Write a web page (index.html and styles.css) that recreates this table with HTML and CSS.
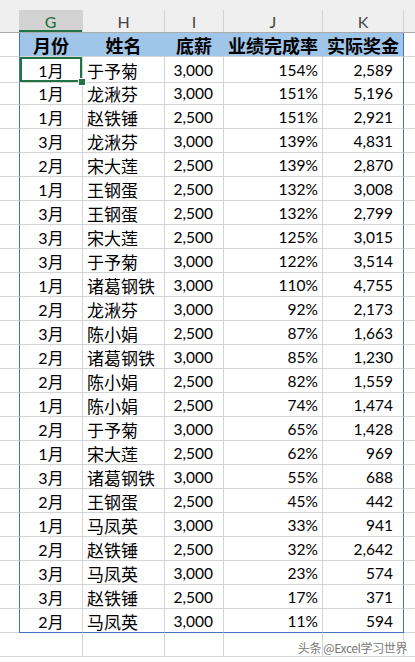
FILE: index.html
```html
<!DOCTYPE html>
<html lang="zh">
<head>
<meta charset="utf-8">
<title>Sheet</title>
<link rel="stylesheet" href="styles.css">
</head>
<body>
<div class="sheet">
  <div class="row band">
    <div class="ch edge-l"></div>
    <div class="ch active">G</div>
    <div class="ch">H</div>
    <div class="ch">I</div>
    <div class="ch">J</div>
    <div class="ch">K</div>
    <div class="ch edge-r"></div>
  </div>
  <div class="row head">
    <div class="c out"></div>
    <div class="c h first">月份</div>
    <div class="c h">姓名</div>
    <div class="c h">底薪</div>
    <div class="c h">业绩完成率</div>
    <div class="c h last">实际奖金</div>
    <div class="c out"></div>
  </div>
  <div class="row"><div class="c out"></div><div class="c m first sel">1月</div><div class="c n">于予菊</div><div class="c b">3,000</div><div class="c p">154%</div><div class="c k last">2,589</div><div class="c out"></div></div>
  <div class="row"><div class="c out"></div><div class="c m first">1月</div><div class="c n">龙湫芬</div><div class="c b">3,000</div><div class="c p">151%</div><div class="c k last">5,196</div><div class="c out"></div></div>
  <div class="row"><div class="c out"></div><div class="c m first">1月</div><div class="c n">赵铁锤</div><div class="c b">2,500</div><div class="c p">151%</div><div class="c k last">2,921</div><div class="c out"></div></div>
  <div class="row"><div class="c out"></div><div class="c m first">3月</div><div class="c n">龙湫芬</div><div class="c b">3,000</div><div class="c p">139%</div><div class="c k last">4,831</div><div class="c out"></div></div>
  <div class="row"><div class="c out"></div><div class="c m first">2月</div><div class="c n">宋大莲</div><div class="c b">2,500</div><div class="c p">139%</div><div class="c k last">2,870</div><div class="c out"></div></div>
  <div class="row"><div class="c out"></div><div class="c m first">1月</div><div class="c n">王钢蛋</div><div class="c b">2,500</div><div class="c p">132%</div><div class="c k last">3,008</div><div class="c out"></div></div>
  <div class="row"><div class="c out"></div><div class="c m first">3月</div><div class="c n">王钢蛋</div><div class="c b">2,500</div><div class="c p">132%</div><div class="c k last">2,799</div><div class="c out"></div></div>
  <div class="row"><div class="c out"></div><div class="c m first">3月</div><div class="c n">宋大莲</div><div class="c b">2,500</div><div class="c p">125%</div><div class="c k last">3,015</div><div class="c out"></div></div>
  <div class="row"><div class="c out"></div><div class="c m first">3月</div><div class="c n">于予菊</div><div class="c b">3,000</div><div class="c p">122%</div><div class="c k last">3,514</div><div class="c out"></div></div>
  <div class="row"><div class="c out"></div><div class="c m first">1月</div><div class="c n">诸葛钢铁</div><div class="c b">3,000</div><div class="c p">110%</div><div class="c k last">4,755</div><div class="c out"></div></div>
  <div class="row"><div class="c out"></div><div class="c m first">2月</div><div class="c n">龙湫芬</div><div class="c b">3,000</div><div class="c p">92%</div><div class="c k last">2,173</div><div class="c out"></div></div>
  <div class="row"><div class="c out"></div><div class="c m first">3月</div><div class="c n">陈小娟</div><div class="c b">2,500</div><div class="c p">87%</div><div class="c k last">1,663</div><div class="c out"></div></div>
  <div class="row"><div class="c out"></div><div class="c m first">2月</div><div class="c n">诸葛钢铁</div><div class="c b">3,000</div><div class="c p">85%</div><div class="c k last">1,230</div><div class="c out"></div></div>
  <div class="row"><div class="c out"></div><div class="c m first">2月</div><div class="c n">陈小娟</div><div class="c b">2,500</div><div class="c p">82%</div><div class="c k last">1,559</div><div class="c out"></div></div>
  <div class="row"><div class="c out"></div><div class="c m first">1月</div><div class="c n">陈小娟</div><div class="c b">2,500</div><div class="c p">74%</div><div class="c k last">1,474</div><div class="c out"></div></div>
  <div class="row"><div class="c out"></div><div class="c m first">2月</div><div class="c n">于予菊</div><div class="c b">3,000</div><div class="c p">65%</div><div class="c k last">1,428</div><div class="c out"></div></div>
  <div class="row"><div class="c out"></div><div class="c m first">1月</div><div class="c n">宋大莲</div><div class="c b">2,500</div><div class="c p">62%</div><div class="c k last">969</div><div class="c out"></div></div>
  <div class="row"><div class="c out"></div><div class="c m first">3月</div><div class="c n">诸葛钢铁</div><div class="c b">3,000</div><div class="c p">55%</div><div class="c k last">688</div><div class="c out"></div></div>
  <div class="row"><div class="c out"></div><div class="c m first">2月</div><div class="c n">王钢蛋</div><div class="c b">2,500</div><div class="c p">45%</div><div class="c k last">442</div><div class="c out"></div></div>
  <div class="row"><div class="c out"></div><div class="c m first">1月</div><div class="c n">马凤英</div><div class="c b">3,000</div><div class="c p">33%</div><div class="c k last">941</div><div class="c out"></div></div>
  <div class="row"><div class="c out"></div><div class="c m first">2月</div><div class="c n">赵铁锤</div><div class="c b">2,500</div><div class="c p">32%</div><div class="c k last">2,642</div><div class="c out"></div></div>
  <div class="row"><div class="c out"></div><div class="c m first">3月</div><div class="c n">马凤英</div><div class="c b">3,000</div><div class="c p">23%</div><div class="c k last">574</div><div class="c out"></div></div>
  <div class="row"><div class="c out"></div><div class="c m first">3月</div><div class="c n">赵铁锤</div><div class="c b">2,500</div><div class="c p">17%</div><div class="c k last">371</div><div class="c out"></div></div>
  <div class="row end"><div class="c out"></div><div class="c m first">2月</div><div class="c n">马凤英</div><div class="c b">3,000</div><div class="c p">11%</div><div class="c k last">594</div><div class="c out"></div></div>
  <div class="row"><div class="c out"></div><div class="c"></div><div class="c"></div><div class="c"></div><div class="c"></div><div class="c"></div><div class="c out"></div></div>
  <div class="watermark">头条 @Excel学习世界</div>
</div>
</body>
</html>
```

FILE: styles.css
```css
* { box-sizing: border-box; }
html, body { margin: 0; padding: 0; background: #fff; }
body { width: 415px; height: 662px; overflow: hidden; font-family: "Lato", "Noto Sans CJK SC", sans-serif; color: #000; }

.sheet { position: relative; width: 415px; }

.row {
  display: grid;
  grid-template-columns: 19px 64px 82px 59px 99px 81px 11px;
  height: 24px;
}

.band {
  height: 33px;
  background: #efefef;
  border-bottom: 1px solid #ababab;
  align-items: end;
}
.ch {
  height: 22px;
  border-right: 1px solid #d2d2d2;
  display: flex;
  align-items: center;
  justify-content: center;
  font-family: "Lato", sans-serif;
  font-size: 16px;
  color: #444;
}
.ch.edge-l, .ch.edge-r { border-right: none; }
.ch.active {
  background: #d2d2d2;
  color: #1f6b3f;
  box-shadow: inset 0 -2px 0 #217346;
}

.c {
  border-right: 1px solid #d4d4d4;
  border-bottom: 1px solid #d4d4d4;
  display: flex;
  align-items: center;
  white-space: nowrap;
  overflow: hidden;
  padding-top: 1px;
}
.c.out { border-right: none; }

.first { border-left: 1px solid #4472c4; }
.last { border-right: 1px solid #4472c4; }
.end .first, .end .n, .end .b, .end .p, .end .last { border-bottom: 1px solid #4472c4; }

.h {
  background: #9fc5e8;
  border-right-color: #9fc5e8;
  border-bottom-color: #d4d4d4;
  justify-content: center;
  font-family: "Noto Sans CJK SC", sans-serif;
  font-weight: 700;
  font-size: 18px;
  padding-top: 0;
}
.h.last { border-right: 1px solid #4472c4; }

.m { justify-content: center; font-size: 16px; }
.n { font-family: "Noto Sans CJK SC", sans-serif; font-size: 17px; padding-left: 4px; }
.b { justify-content: flex-end; font-size: 15.5px; padding-right: 10px; }
.p { justify-content: flex-end; font-size: 15.5px; padding-right: 4px; }
.k { justify-content: flex-end; font-size: 15.5px; padding-right: 10px; }

.sel { position: relative; overflow: visible; box-shadow: inset 0 0 0 2px #217346; }
.sel::after {
  content: "";
  position: absolute;
  right: -4px;
  bottom: -4px;
  width: 6px;
  height: 6px;
  background: #217346;
  border: 1px solid #fff;
}

.watermark {
  position: absolute;
  right: 8px;
  top: 639px;
  font-family: "Noto Sans CJK SC", sans-serif;
  font-size: 12px;
  letter-spacing: -0.4px;
  color: #777;
  text-shadow: 0 0 2px #fff, 0 0 2px #fff;
}
```
